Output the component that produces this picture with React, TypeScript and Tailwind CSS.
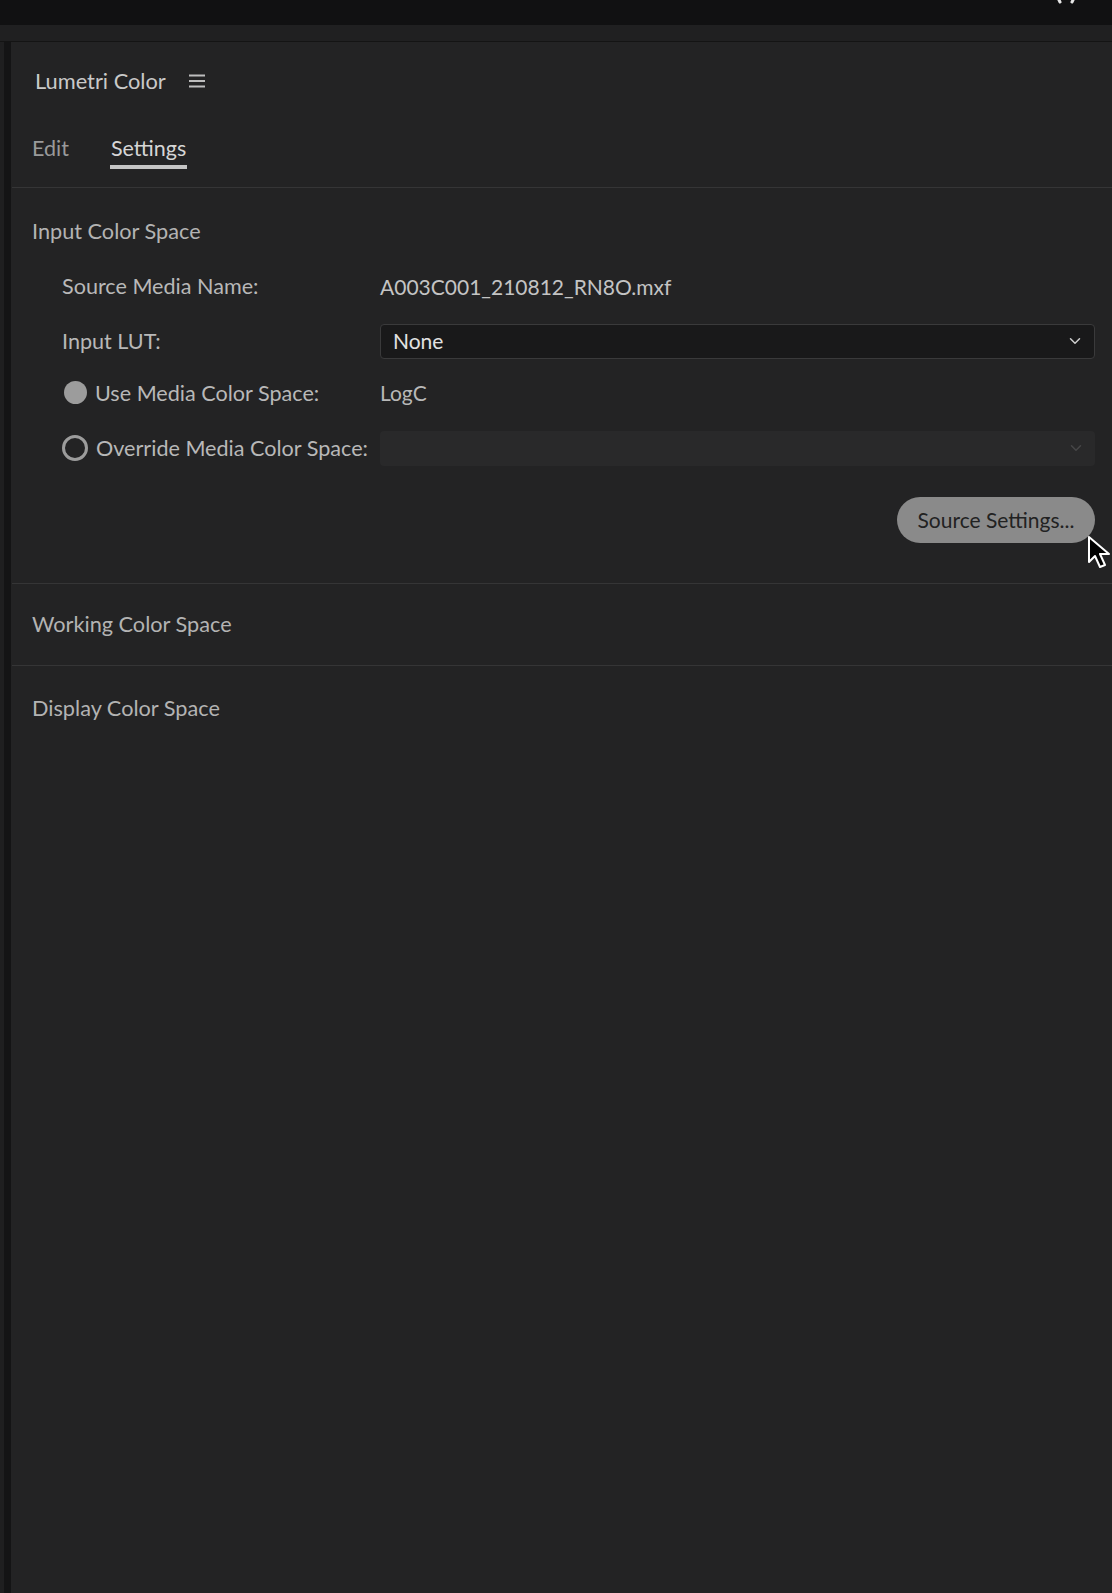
import { ChevronDown } from 'lucide-react'

const font = { fontFamily: 'Lato, "Noto Sans", sans-serif' }

const Radio = ({ checked }: { checked: boolean }) =>
  checked ? (
    <span className="w-[23px] h-[23px] rounded-full bg-[#9c9c9c] shrink-0" />
  ) : (
    <span className="w-[26px] h-[26px] rounded-full border-[3px] border-[#9c9c9c] shrink-0 -ml-[2px]" />
  )

export default function App() {
  return (
    <div className="w-[1112px] h-[1593px] bg-[#111112] flex flex-col overflow-hidden relative" style={font}>
      {/* window chrome */}
      <div className="h-[25px] bg-[#111112] relative shrink-0">
        <svg className="absolute right-[28px] -top-[14px]" width="34" height="18" viewBox="0 0 34 18">
          <path d="M2 0 L10 16 M30 0 L22 16" stroke="#e6e6e6" strokeWidth="3" strokeLinecap="round" />
        </svg>
      </div>
      <div className="h-[16px] bg-[#202021] shrink-0" />
      <div className="h-px bg-[#141414] shrink-0" />

      <div className="flex-1 flex">
        <div className="w-[4px] bg-[#1f1f20]" />
        <div className="w-[7px] bg-[#141415]" />

        <div className="flex-1 bg-[#232324] flex flex-col relative">
          {/* header */}
          <div className="h-[78px] flex items-center pl-[24px] gap-[23px] shrink-0">
            <span className="text-[21.8px] text-[#c9c9c9]">Lumetri Color</span>
            <svg width="16" height="14" viewBox="0 0 16 14">
              <path d="M0 1.5 H16 M0 7 H16 M0 12.5 H16" stroke="#bdbdbd" strokeWidth="1.8" />
            </svg>
          </div>

          {/* tabs */}
          <div className="h-[67px] flex pl-[21px] gap-[42px] shrink-0">
            <div className="flex flex-col pt-[14px]">
              <span className="h-[28px] leading-[28px] text-[21.5px] text-[#9a9a9a]">Edit</span>
            </div>
            <div className="flex flex-col pt-[14px]">
              <span className="h-[28px] leading-[28px] text-[21.5px] text-[#d6d6d6]">Settings</span>
              <span className="mt-[3px] h-[4px] bg-[#c4c4c4] -mx-[1px]" />
            </div>
          </div>
          <div className="h-px bg-[#353536] ml-[1px] shrink-0" />

          {/* input color space */}
          <div className="h-[71px] pt-[16px] flex items-center pl-[21px] text-[21.7px] text-[#b3b3b3] shrink-0">
            Input Color Space
          </div>

          <div className="flex flex-col pr-[17px] text-[21.6px] text-[#b8b8b8] shrink-0">
            <div className="h-[55px] flex items-center">
              <div className="w-[369px] pl-[51px]">Source Media Name:</div>
              <div className="text-[21px] text-[#c4c4c4]">A003C001_210812_RN8O.mxf</div>
            </div>
            <div className="h-[54px] flex items-center">
              <div className="w-[369px] pl-[51px]">Input LUT:</div>
              <div className="flex-1 h-[35px] rounded-[4px] bg-[#19191a] border border-[#3a3a3b] flex items-center justify-between pl-[12px] pr-[10px]">
                <span className="text-[21px] text-[#e2e2e2]">None</span>
                <ChevronDown size={18} strokeWidth={2} className="text-[#cfcfcf]" />
              </div>
            </div>
            <div className="h-[50px] flex items-center">
              <div className="w-[369px] pl-[53px] flex items-center gap-[8px]">
                <Radio checked />
                <span className="whitespace-nowrap">Use Media Color Space:</span>
              </div>
              <div className="text-[21px]">LogC</div>
            </div>
            <div className="h-[60px] flex items-center">
              <div className="w-[369px] pl-[53px] flex items-center gap-[8px]">
                <Radio checked={false} />
                <span className="whitespace-nowrap">Override Media Color Space:</span>
              </div>
              <div className="flex-1 h-[35px] rounded-[4px] bg-[#29292a] flex items-center justify-end pr-[10px]">
                <ChevronDown size={18} strokeWidth={2} className="text-[#474748]" />
              </div>
            </div>

            <div className="mt-[19px] flex justify-end">
              <div className="h-[46px] w-[198px] rounded-full bg-[#8a8a8a] flex items-center justify-center text-[#222222] text-[21px] relative">
                Source Settings...
                <svg className="absolute -right-[20px] top-[38px]" width="28" height="36" viewBox="0 0 28 36">
                  <path
                    d="M2 2 L2 27 L8 21 L13 32 L18 30 L13 19 L22 19 Z"
                    fill="#000"
                    stroke="#fff"
                    strokeWidth="2"
                    strokeLinejoin="round"
                  />
                </svg>
              </div>
            </div>
          </div>

          <div className="h-[40px] shrink-0" />
          <div className="h-px bg-[#353536] ml-[1px] shrink-0" />

          <div className="h-[81px] flex items-center pl-[21px] text-[21.7px] text-[#b3b3b3] shrink-0">
            Working Color Space
          </div>
          <div className="h-px bg-[#353536] ml-[1px] shrink-0" />
          <div className="h-[84px] flex items-center pl-[21px] text-[21.7px] text-[#b3b3b3] shrink-0">
            Display Color Space
          </div>
        </div>
      </div>
    </div>
  )
}
